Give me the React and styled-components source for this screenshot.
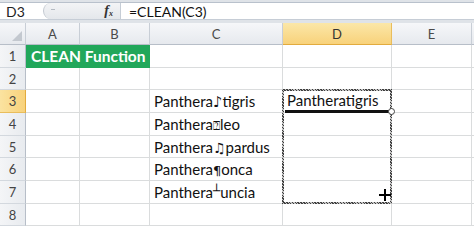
import React from "react";
import styled, { createGlobalStyle } from "styled-components";

const Global = createGlobalStyle`
  body {
    margin: 0;
    background: #ffffff;
    font-family: Lato, "Open Sans", sans-serif;
  }
`;

const Page = styled.div`
  width: 474px;
  height: 229px;
  overflow: hidden;
  background: #ffffff;
`;

const TopBand = styled.div`
  background: #dfe3e8;
  padding: 2px 0 3px;
`;

const FormulaBar = styled.div`
  display: flex;
  height: 18px;
  border-top: 1px solid #b9c1cc;
  border-bottom: 1px solid #c6cdd6;
  background: #ffffff;
  box-sizing: border-box;
`;

const NameBox = styled.div`
  width: 43px;
  display: flex;
  align-items: center;
  padding-left: 6px;
  box-sizing: border-box;
  font-size: 14px;
  color: #222;
`;

const Splitter = styled.div`
  width: 77px;
  display: flex;
  align-items: center;
  justify-content: flex-end;
  position: relative;
  background: linear-gradient(#f3f4f6, #e4e7eb);
  border-radius: 9px 0 0 9px;
  border-left: 1px solid #c3c9d1;
  box-sizing: border-box;
  padding-right: 7px;
`;

const Grip = styled.span`
  position: absolute;
  left: 7px;
  top: 6px;
  width: 4px;
  height: 1px;
  background: #b4bac2;
`;

const Fx = styled.span`
  font-family: "Liberation Serif", serif;
  font-style: italic;
  font-weight: bold;
  font-size: 14px;
  color: #333;
  sub {
    font-size: 8px;
    vertical-align: -1px;
  }
`;

const Formula = styled.div`
  flex: 1;
  display: flex;
  align-items: center;
  padding-left: 8px;
  border-left: 1px solid #c6cdd6;
  font-size: 14px;
  color: #111;
`;

const Sheet = styled.div`
  display: grid;
  grid-template-columns: 26px 54px 70px 133px 109px 80px 40px;
  grid-template-rows: 22px 23px 22px 23px 23px 22px 23px 23px 22px;
`;

const ColHead = styled.div`
  display: flex;
  align-items: center;
  justify-content: center;
  box-sizing: border-box;
  font-size: 13px;
  color: ${(p) => (p.$active ? "#333" : "#4a4a4a")};
  background: ${(p) =>
    p.$active
      ? "linear-gradient(#fbe7a8, #f8d27b)"
      : "linear-gradient(#f6f7f9, #e6e9ee)"};
  border-right: 1px solid ${(p) => (p.$active ? "#e9bd5c" : "#c8ced6")};
  border-bottom: 1px solid ${(p) => (p.$active ? "#e2ab3e" : "#b7bec8")};
`;

const Corner = styled(ColHead)`
  position: relative;
  &::after {
    content: "";
    position: absolute;
    right: 3px;
    bottom: 3px;
    border-style: solid;
    border-width: 0 0 10px 10px;
    border-color: transparent transparent #c3c8cf transparent;
  }
`;

const RowHead = styled.div`
  display: flex;
  align-items: center;
  justify-content: center;
  box-sizing: border-box;
  font-size: 13px;
  color: #444;
  background: ${(p) =>
    p.$active
      ? "linear-gradient(90deg, #fbe3a0, #f8d27b)"
      : "linear-gradient(90deg, #f4f5f7, #e8ebef)"};
  border-right: 1px solid ${(p) => (p.$active ? "#e2ab3e" : "#b7bec8")};
  border-bottom: 1px solid ${(p) => (p.$active ? "#e9bd5c" : "#d3d8de")};
`;

const Cell = styled.div`
  display: flex;
  align-items: center;
  position: relative;
  box-sizing: border-box;
  padding-left: 4px;
  white-space: nowrap;
  font-size: 15px;
  color: #111;
  border-right: 1px solid #dadcdd;
  border-bottom: 1px solid #dadcdd;
`;

const Title = styled(Cell)`
  grid-column: span 2;
  background: #21a75a;
  color: #ffffff;
  font-weight: bold;
  font-size: 15.5px;
  padding-left: 5px;
  border-color: #21a75a;
`;

const Odd = styled.span`
  font-family: "DejaVu Sans", sans-serif;
  font-size: ${(p) => p.$size || 12}px;
  vertical-align: ${(p) => p.$raise || 0}px;
`;

const Selection = styled.div`
  position: absolute;
  top: -1px;
  left: -1px;
  width: 110px;
  height: 115px;
  box-sizing: border-box;
  border: 2px solid #777;
  border-image: repeating-linear-gradient(
      45deg,
      #3f3f3f 0 1px,
      #c4c4c4 1px 2px
    )
    2;
  pointer-events: none;
  z-index: 2;
`;

const EditCell = styled.div`
  height: 22px;
  display: flex;
  flex-direction: column;
  justify-content: flex-end;
  padding: 0 1px;
  position: relative;
`;

const EditText = styled.div`
  font-size: 15px;
  color: #111;
  padding-left: 2px;
  line-height: 19px;
`;

const EditLine = styled.div`
  height: 3px;
  background: #111;
`;

const Knob = styled.span`
  position: absolute;
  right: -5px;
  bottom: -2px;
  width: 5px;
  height: 5px;
  border: 1px solid #444;
  border-radius: 50%;
  background: #fff;
`;

const Cross = styled.svg`
  position: absolute;
  right: -1px;
  bottom: 1px;
`;

const cols = ["A", "B", "C", "D", "E", ""];

const names = [
  ["Panthera", "\u266A", "tigris", 15, 0],
  ["Panthera", "\u2370", "leo", 12, 0],
  ["Panthera", "\u266B", "pardus", 14, 0],
  ["Panthera", "\u00B6", "onca", 13, 0],
  ["Panthera", "\u2534", "uncia", 12, 3],
];

export default function App() {
  const rows = [];
  for (let r = 1; r <= 8; r++) {
    const cells = [];
    if (r === 1) {
      cells.push(<Title key="t">CLEAN Function</Title>);
    } else {
      cells.push(<Cell key="a" />, <Cell key="b" />);
    }
    const n = names[r - 3];
    cells.push(
      <Cell key="c">
        {n && (
          <span>
            {n[0]}
            <Odd $size={n[3]} $raise={n[4]}>
              {n[1]}
            </Odd>
            {n[2]}
          </span>
        )}
      </Cell>
    );
    cells.push(
      <Cell key="d">
        {r === 3 && (
          <Selection>
            <EditCell>
              <EditText>Pantheratigris</EditText>
              <EditLine />
              <Knob />
            </EditCell>
            <Cross width="12" height="12" viewBox="0 0 12 12">
              <path d="M6 0v12M0 6h12" stroke="#000" strokeWidth="2" />
            </Cross>
          </Selection>
        )}
      </Cell>,
      <Cell key="e" />,
      <Cell key="f" />
    );
    rows.push(
      <React.Fragment key={r}>
        <RowHead $active={r === 3}>{r}</RowHead>
        {cells}
      </React.Fragment>
    );
  }

  return (
    <Page>
      <Global />
      <TopBand>
        <FormulaBar>
          <NameBox>D3</NameBox>
          <Splitter>
            <Grip />
            <Fx>
              f<sub>x</sub>
            </Fx>
          </Splitter>
          <Formula>=CLEAN(C3)</Formula>
        </FormulaBar>
      </TopBand>
      <Sheet>
        <Corner />
        {cols.map((c) => (
          <ColHead key={c || "f"} $active={c === "D"}>
            {c}
          </ColHead>
        ))}
        {rows}
      </Sheet>
    </Page>
  );
}
